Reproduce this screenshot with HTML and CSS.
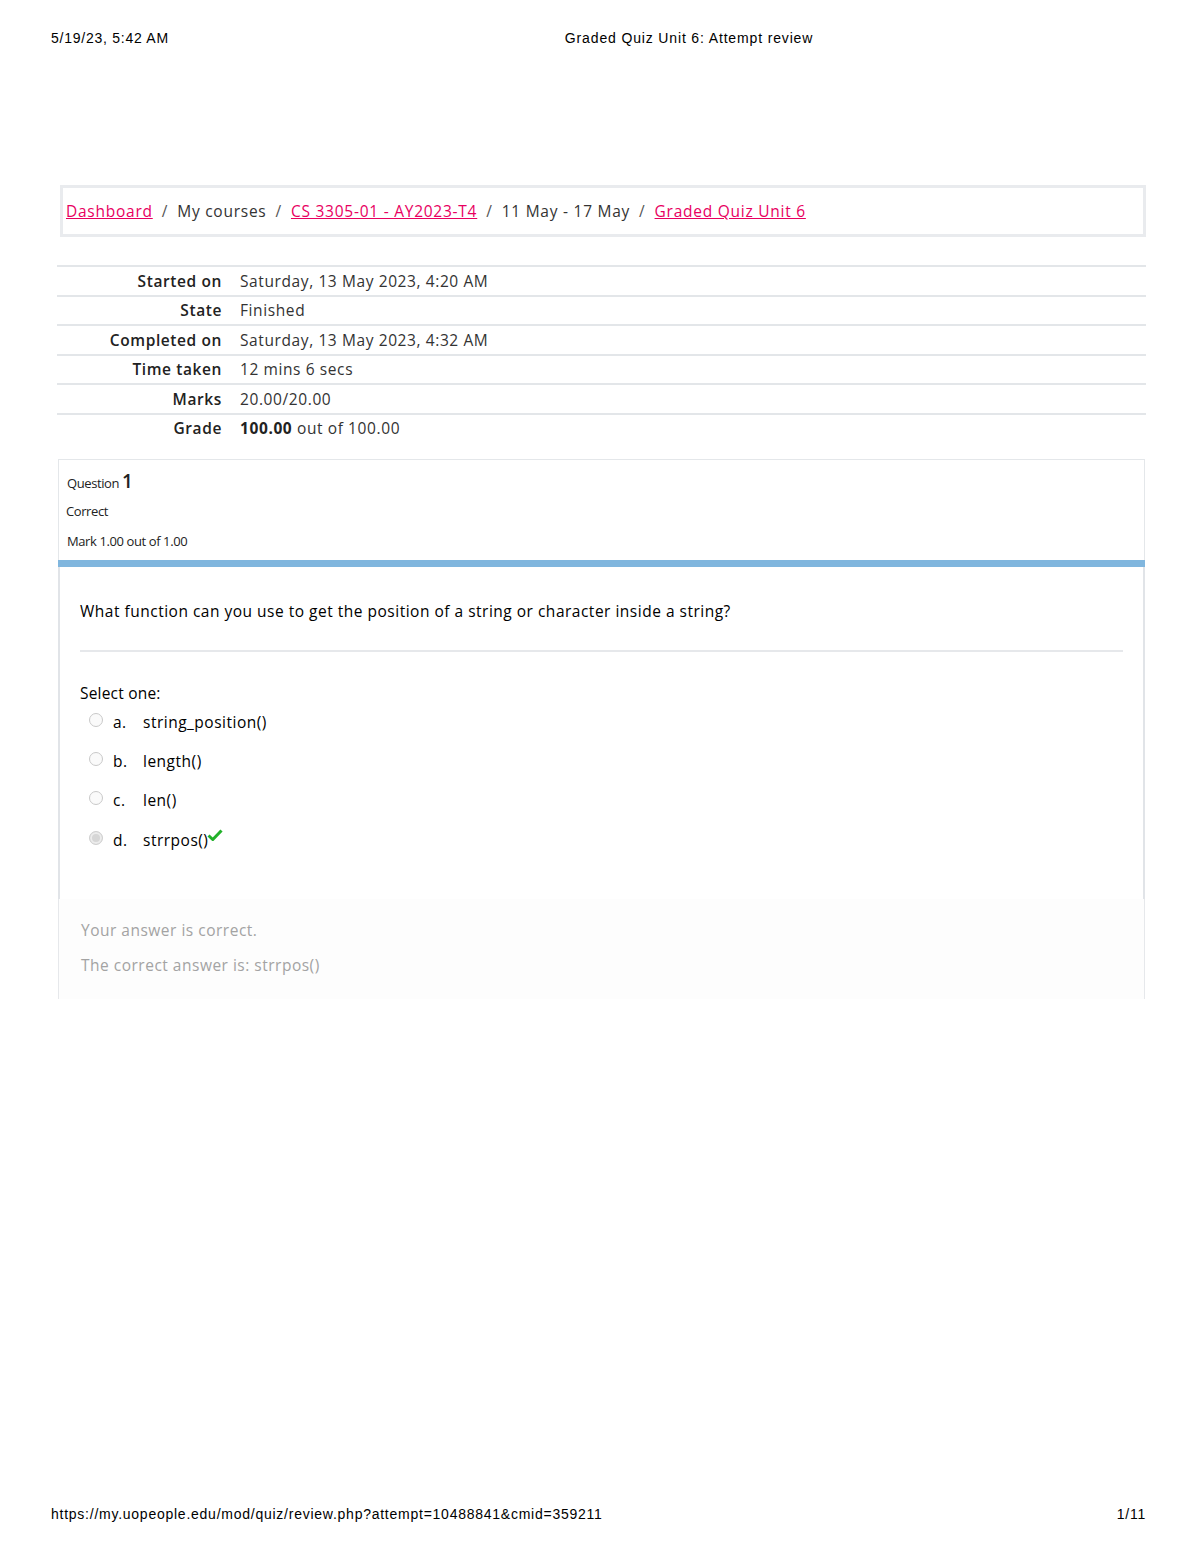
FILE: index.html
```html
<!DOCTYPE html>
<html>
<head>
<meta charset="utf-8">
<title>Graded Quiz Unit 6: Attempt review</title>
<link rel="stylesheet" href="styles.css">
</head>
<body>
<header class="print-head">
  <span class="ph-date">5/19/23, 5:42 AM</span>
  <span class="ph-title">Graded Quiz Unit 6: Attempt review</span>
</header>

<main class="page">
  <nav class="crumbs">
    <a href="#">Dashboard</a><span class="sep">/</span><span>My courses</span><span class="sep">/</span><a href="#">CS 3305-01 - AY2023-T4</a><span class="sep">/</span><span>11 May - 17 May</span><span class="sep">/</span><a href="#">Graded Quiz Unit 6</a>
  </nav>

  <table class="summary">
    <tr><th>Started on</th><td>Saturday, 13 May 2023, 4:20 AM</td></tr>
    <tr><th>State</th><td>Finished</td></tr>
    <tr><th>Completed on</th><td>Saturday, 13 May 2023, 4:32 AM</td></tr>
    <tr><th>Time taken</th><td>12 mins 6 secs</td></tr>
    <tr><th>Marks</th><td>20.00/20.00</td></tr>
    <tr><th>Grade</th><td><b>100.00</b> out of 100.00</td></tr>
  </table>

  <section class="que">
    <div class="info">
      <div class="qno">Question <span class="num">1</span></div>
      <div class="state">Correct</div>
      <div class="grade">Mark 1.00 out of 1.00</div>
    </div>
    <div class="bar"></div>
    <div class="formulation">
      <p class="qtext">What function can you use to get the position of a string or character inside a string?</p>
      <hr class="rule">
      <div class="prompt">Select one:</div>
      <ul class="answers">
        <li><span class="radio"></span><span class="letter">a.</span><span>string_position()</span></li>
        <li><span class="radio"></span><span class="letter">b.</span><span>length()</span></li>
        <li><span class="radio"></span><span class="letter">c.</span><span>len()</span></li>
        <li><span class="radio checked"></span><span class="letter">d.</span><span>strrpos()</span><svg class="tick" viewBox="0 0 16 12" width="16" height="12"><path d="M1.5 6.5 L5.8 10.5 L14.5 1.5" fill="none" stroke="#22b12a" stroke-width="3" stroke-linejoin="miter"/></svg></li>
      </ul>
    </div>
    <div class="outcome">
      <p>Your answer is correct.</p>
      <p>The correct answer is: strrpos()</p>
    </div>
  </section>
</main>

<footer class="print-foot">
  <span>https://my.uopeople.edu/mod/quiz/review.php?attempt=10488841&amp;cmid=359211</span>
  <span>1/11</span>
</footer>
</body>
</html>
```

FILE: styles.css
```css
html, body {
  margin: 0;
  padding: 0;
  background: #fff;
}
body {
  width: 1200px;
  min-height: 1553px;
  display: flex;
  flex-direction: column;
  font-family: "Open Sans", "Noto Sans", sans-serif;
  color: #1d2125;
}

.print-head, .print-foot {
  font-family: "Liberation Sans", Arial, sans-serif;
  font-size: 14px;
  letter-spacing: 0.75px;
  color: #000;
  display: flex;
  padding: 0 54px 0 51px;
}
.print-head {
  padding-top: 30px;
  height: 20px;
}
.ph-title {
  margin-left: 396px;
  letter-spacing: 0.85px;
}
.print-foot {
  margin-top: auto;
  justify-content: space-between;
  padding-bottom: 31px;
}

.page {
  margin-left: 57px;
  width: 1089px;
  margin-top: 135px;
}

.crumbs {
  margin-left: 3px;
  height: 46px;
  border: 3px solid #e9ebee;
  padding-left: 3px;
  display: flex;
  align-items: center;
  font-size: 15.5px;
  letter-spacing: 0.75px;
  color: #333;
}
.crumbs a {
  color: #e8005f;
  text-decoration: underline;
}
.crumbs .sep {
  margin: 0 9px;
  color: #555;
}

.summary {
  margin-top: 28px;
  width: 100%;
  border-collapse: collapse;
  font-size: 15.5px;
  letter-spacing: 0.6px;
}
.summary th, .summary td {
  border-top: 2px solid #e3e6e9;
  height: 27.5px;
  padding: 0;
  vertical-align: middle;
}
.summary th {
  width: 165px;
  text-align: right;
  padding-right: 18px;
  font-weight: 600;
  color: #222;
}
.summary td {
  color: #333;
}
.summary td b {
  font-weight: 700;
  color: #222;
}

.que {
  margin-top: 17px;
  margin-left: 1px;
  width: 1087px;
  height: 540px;
  display: flex;
  flex-direction: column;
}
.info {
  border: 1px solid #e4e7ea;
  border-bottom: none;
  height: 100px;
  padding-left: 8px;
  font-size: 13px;
  color: #222;
  letter-spacing: -0.4px;
}
.qno {
  margin-top: 8px;
  height: 22px;
}
.qno .num {
  font-size: 19px;
  font-weight: 600;
}
.state {
  margin-top: 12px;
  height: 22px;
  margin-left: -1px;
}
.grade {
  margin-top: 8px;
}
.bar {
  height: 7px;
  background: #80b6de;
}
.formulation {
  border-left: 2px solid #e1e4e8;
  border-right: 2px solid #e1e4e8;
  height: 332px;
  padding: 0 20px;
  letter-spacing: 0.5px;
}
.qtext {
  margin: 32px 0 0;
  font-size: 15.5px;
  color: #000;
  line-height: 24px;
}
.rule {
  margin: 27px 0 0;
  border: none;
  border-top: 2px solid #e6e8eb;
  width: 1043px;
}
.prompt {
  margin-top: 29px;
  font-size: 15.5px;
  color: #000;
  line-height: 24px;
  letter-spacing: 0.2px;
}
.answers {
  list-style: none;
  margin: -3px 0 0;
  padding: 0 0 0 9px;
}
.answers li {
  display: flex;
  align-items: center;
  height: 39.3px;
  font-size: 15.5px;
  color: #000;
}
.radio {
  width: 12px;
  height: 12px;
  border: 1px solid #c9c9c9;
  border-radius: 50%;
  background: #fafafa;
  margin-right: 10px;
  margin-top: -4px;
}
.radio.checked {
  background: #d6d6d6;
  border-color: #d0d0d0;
  box-shadow: inset 0 0 0 2px #ececec;
}
.letter {
  width: 30px;
}
.tick {
  margin-left: -1px;
  margin-top: -10px;
}
.outcome {
  flex: 1;
  border-left: 1px solid #e6e8eb;
  border-right: 1px solid #e6e8eb;
  background: #fdfdfd;
  padding: 19px 22px 0;
  font-size: 15.5px;
  letter-spacing: 0.5px;
  color: #a3a3a3;
}
.outcome p {
  margin: 0 0 11px;
  line-height: 24px;
}
```
